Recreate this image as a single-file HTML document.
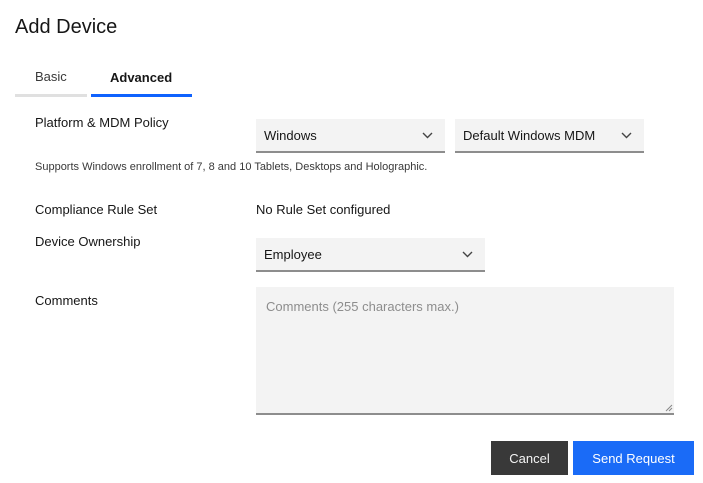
<!DOCTYPE html>
<html><head><style>
body{margin:0;width:703px;height:483px;background:#fff;font-family:"Liberation Sans",Arial,sans-serif;color:#161616;position:relative;overflow:hidden}
.a{position:absolute;white-space:nowrap}
.lbl{font-size:13px;color:#161616}
.sel{position:absolute;background:#f3f3f3;border-bottom:2px solid #8d8d8d;box-sizing:border-box;font-size:13px;color:#161616}
.sel span{position:absolute;left:8px;top:9px}
.sel svg{position:absolute;right:12px;top:13px}
</style></head><body>
<div class="a" style="left:15px;top:16px;font-size:20px;">Add Device</div>
<div class="a" style="left:35px;top:69px;font-size:13px;color:#393939">Basic</div>
<div class="a" style="left:110px;top:70px;font-size:13px;font-weight:bold">Advanced</div>
<div class="a" style="left:15px;top:94px;width:72px;height:3px;background:#e0e0e0"></div>
<div class="a" style="left:91px;top:94px;width:101px;height:3px;background:#0f62fe"></div>

<div class="a lbl" style="left:35px;top:115px">Platform &amp; MDM Policy</div>
<div class="sel" style="left:256px;top:119px;width:189px;height:34px"><span>Windows</span><svg width="11" height="7" viewBox="0 0 11 7"><path d="M1 1l4.5 4.5L10 1" fill="none" stroke="#444" stroke-width="1.4"/></svg></div>
<div class="sel" style="left:455px;top:119px;width:189px;height:34px"><span>Default Windows MDM</span><svg width="11" height="7" viewBox="0 0 11 7"><path d="M1 1l4.5 4.5L10 1" fill="none" stroke="#444" stroke-width="1.4"/></svg></div>
<div class="a" style="left:35px;top:161px;font-size:11px;color:#393939">Supports Windows enrollment of 7, 8 and 10 Tablets, Desktops and Holographic.</div>

<div class="a lbl" style="left:35px;top:202px">Compliance Rule Set</div>
<div class="a lbl" style="left:256px;top:202px">No Rule Set configured</div>
<div class="a lbl" style="left:35px;top:234px">Device Ownership</div>
<div class="sel" style="left:256px;top:238px;width:229px;height:34px"><span>Employee</span><svg width="11" height="7" viewBox="0 0 11 7"><path d="M1 1l4.5 4.5L10 1" fill="none" stroke="#444" stroke-width="1.4"/></svg></div>

<div class="a lbl" style="left:35px;top:293px">Comments</div>
<div class="a" style="left:256px;top:287px;width:418px;height:128px;background:#f3f3f3;border-bottom:2px solid #8d8d8d;box-sizing:border-box">
<div class="a" style="left:10px;top:12px;font-size:13px;color:#8d8d8d">Comments (255 characters max.)</div>
<svg class="a" style="right:1px;bottom:1px" width="8" height="8"><path d="M7 1L1 7M7 4L4 7" stroke="#888" stroke-width="1"/></svg>
</div>

<div class="a" style="left:491px;top:441px;width:77px;height:34px;background:#393939;color:#f4f4f4;font-size:13px;text-align:center;line-height:36px">Cancel</div>
<div class="a" style="left:573px;top:441px;width:121px;height:34px;background:#1a6bf7;color:#fff;font-size:13px;text-align:center;line-height:36px">Send Request</div>
</body></html>
